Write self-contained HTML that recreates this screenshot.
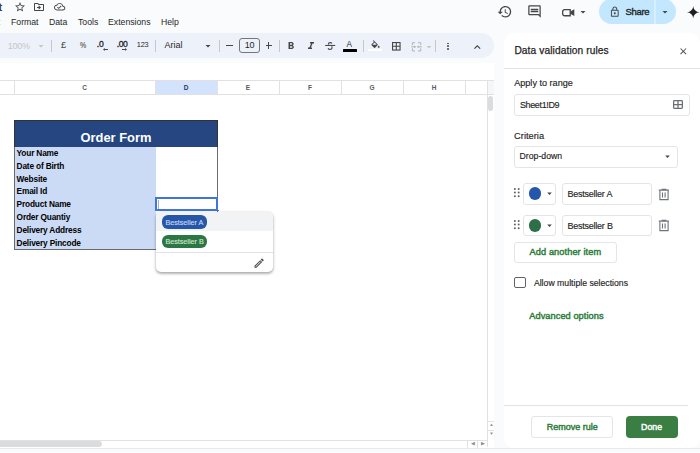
<!DOCTYPE html>
<html><head><meta charset="utf-8">
<style>
*{box-sizing:border-box;margin:0;padding:0}
html,body{width:700px;height:453px;overflow:hidden;background:#f9fbfd;font-family:"Liberation Sans",sans-serif;color:#1f1f1f;position:relative}
.a{position:absolute;white-space:nowrap;line-height:12px}
svg{position:absolute;overflow:visible}
.menu{top:15.6px;font-size:8.7px;color:#1f1f1f}
#tb{left:-20px;top:33px;width:514px;height:25px;background:#edf2fa;border-radius:12.5px}
.sep{width:1px;height:12px;background:#c7c7c7;top:39.5px}
#grid{left:0;top:63px;width:494px;height:385px;background:#fff}
.hl{background:#e1e1e1;height:1px}
.vl{background:#e1e1e1;width:1px}
.ch{top:80px;height:15px;font-size:6.5px;line-height:15px;text-align:center;color:#575a5f;font-weight:bold}
.row{left:16.6px;font-size:8.3px;font-weight:bold;color:#000;letter-spacing:-0.17px}
#panel{left:504px;top:33px;width:196px;height:414.5px;background:#fff;border-radius:10px}
.lbl{font-size:9px;color:#1f1f1f;-webkit-text-stroke:0.15px #1f1f1f}
.box{position:absolute;border:1px solid #e3e5e8;border-radius:3px;background:#fff}
.green{color:#2e7d3a;-webkit-text-stroke:0.45px #2e7d3a}
.ic{fill:#444746}
</style></head><body>

<!-- title row -->
<div class="a" style="left:-1.6px;top:-0.5px;font-size:11px;line-height:14px;font-weight:bold;color:#3c3c3c">t</div>
<svg style="left:14px;top:1px" width="12" height="12" viewBox="0 0 24 24"><path class="ic" d="M22 9.24l-7.19-.62L12 2 9.19 8.63 2 9.24l5.46 4.73L5.82 21 12 17.27 18.18 21l-1.63-7.03L22 9.24zM12 15.4l-3.76 2.27 1-4.28-3.32-2.88 4.38-.38L12 6.1l1.71 4.04 4.38.38-3.32 2.88 1 4.28L12 15.4z"/></svg>
<svg style="left:33px;top:1px" width="12" height="12" viewBox="0 0 24 24"><path class="ic" d="M20 6h-8l-2-2H4c-1.1 0-1.99.9-1.99 2L2 18c0 1.1.9 2 2 2h16c1.1 0 2-.9 2-2V8c0-1.1-.9-2-2-2zm0 12H4V6h5.17l2 2H20v10zm-7.84-6H8v2h4.16l-1.59 1.59L11.99 17 16 13.01 11.99 9l-1.41 1.41L12.16 12z"/></svg>
<svg style="left:53.8px;top:1.4px" width="11.3" height="11.3" viewBox="0 0 24 24"><path class="ic" d="M19.35 10.04C18.67 6.59 15.64 4 12 4 9.11 4 6.6 5.64 5.35 8.04 2.34 8.360 0 10.91 0 14c0 3.31 2.69 6 6 6h13c2.76 0 5-2.240 5-5 0-2.64-2.05-4.78-4.65-4.96zM19 18H6c-2.21 0-4-1.79-4-4 0-2.05 1.53-3.76 3.56-3.97l1.07-.11.5-.95C8.08 7.14 9.94 6 12 6c2.62 0 4.88 1.86 5.39 4.43l.3 1.5 1.53.11c1.56.1 2.78 1.41 2.780 2.960 0 1.65-1.35 3-3 3zm-9-3.82l-2.09-2.09L6.5 13.5 10 17l6.01-6.01-1.41-1.41z"/></svg>

<!-- right top icons -->
<svg style="left:496.8px;top:4px" width="15.5" height="15.5" viewBox="0 0 24 24"><path class="ic" d="M13 3c-4.97 0-9 4.03-9 9H1l3.89 3.89.07.14L9 12H6c0-3.87 3.13-7 7-7s7 3.13 7 7-3.13 7-7 7c-1.93 0-3.68-.79-4.94-2.06l-1.42 1.42C8.270 19.99 10.51 21 13 21c4.97 0 9-4.03 9-9s-4.03-9-9-9zm-1 5v5l4.28 2.54.72-1.21-3.5-2.08V8H12z"/></svg>
<svg style="left:527.3px;top:4.2px" width="15" height="15" viewBox="0 0 24 24"><path fill="#444746" d="M21.99 4c0-1.1-.89-2-1.99-2H4c-1.1 0-2 .9-2 2v12c0 1.1.9 2 2 2h14l4 4-.01-18zM20 4v13.17L18.83 16H4V4h16zM6 7.5h12v2H6zm0 3.5h12v2H6z"/><path fill="#9aa0a6" d="M6 9.5h12v1.5H6z"/></svg>
<svg style="left:561.7px;top:9.3px" width="12.5" height="7.4" viewBox="0 0 12.5 7.4"><path fill="none" stroke="#444746" stroke-width="1.3" d="M2.6 0.65H8.2V6.75H2.6C1.5 6.75 0.65 5.9 0.65 4.8V2.6C0.65 1.5 1.5 0.65 2.6 0.65z"/><path fill="#444746" d="M8.2 2.6L12.3 0.3V7.1L8.2 4.8z"/></svg>
<svg style="left:576.5px;top:6px" width="12" height="12" viewBox="0 0 24 24"><path class="ic" d="M7 10l5 5 5-5z"/></svg>

<!-- share -->
<div class="a" style="left:599px;top:-1px;width:77px;height:25px;border-radius:12.5px;background:#c2e7ff"></div>
<div class="a" style="left:654px;top:-1px;width:1.5px;height:25px;background:#d8effe"></div>
<svg style="left:609.3px;top:5.9px" width="11.6" height="11.6" viewBox="0 0 24 24"><path class="ic" fill="#1f1f1f" d="M18 8h-1V6c0-2.76-2.24-5-5-5S7 3.24 7 6v2H6c-1.1 0-2 .9-2 2v10c0 1.1.9 2 2 2h12c1.1 0 2-.9 2-2V10c0-1.1-.9-2-2-2zM9 6c0-1.66 1.34-3 3-3s3 1.34 3 3v2H9V6zm9 14H6V10h12v10zm-6-3c1.1 0 2-.9 2-2s-.9-2-2-2-2 .9-2 2 .9 2 2 2z"/></svg>
<div class="a" style="left:625.6px;top:5.6px;font-size:9.5px;color:#1f1f1f;letter-spacing:-0.35px;-webkit-text-stroke:0.35px #1f1f1f">Share</div>
<svg style="left:659px;top:6px" width="12" height="12" viewBox="0 0 24 24"><path class="ic" fill="#1f1f1f" d="M7 10l5 5 5-5z"/></svg>
<svg style="left:686.5px;top:5.5px" width="12.5" height="12.5" viewBox="0 0 24 24"><path fill="#1f1f1f" d="M12 0C12.5 6.8 17.2 11.5 24 12 17.2 12.5 12.5 17.2 12 24 11.5 17.2 6.8 12.5 0 12 6.8 11.5 11.5 6.8 12 0z"/></svg>

<!-- menubar -->
<div class="a menu" style="left:-1.8px">:</div>
<div class="a menu" style="left:11px">Format</div>
<div class="a menu" style="left:49px">Data</div>
<div class="a menu" style="left:78px">Tools</div>
<div class="a menu" style="left:108px">Extensions</div>
<div class="a menu" style="left:161px">Help</div>

<!-- toolbar -->
<div class="a" id="tb"></div>
<div class="a" style="left:7.7px;top:39.9px;font-size:9px;color:#c4c7c5;letter-spacing:-0.25px">100%</div>
<svg style="left:34.5px;top:40px" width="12" height="12" viewBox="0 0 24 24"><path fill="#c4c7c5" d="M7 10l5 5 5-5z"/></svg>
<div class="a sep" style="left:51.2px"></div>
<div class="a" style="left:61px;top:39.4px;font-size:9px;color:#444746;-webkit-text-stroke:0.1px #444746">£</div>
<div class="a" style="left:79.6px;top:39.2px;font-size:9.2px;color:#444746;transform:scaleX(0.76);transform-origin:0 0;-webkit-text-stroke:0.1px #444746">%</div>
<div class="a" style="left:96.8px;top:38.2px;font-size:8.6px;color:#1f1f1f;letter-spacing:-0.3px;-webkit-text-stroke:0.3px #1f1f1f">.0</div>
<svg style="left:103px;top:48px" width="5" height="3" viewBox="0 0 5 3"><path fill="#444746" d="M0 1.5L1.8 0V1.05H5V1.95H1.8V3z"/></svg>
<div class="a" style="left:116.8px;top:38.2px;font-size:8.6px;color:#1f1f1f;letter-spacing:-0.45px;-webkit-text-stroke:0.3px #1f1f1f">.00</div>
<svg style="left:122.4px;top:48px" width="5" height="3" viewBox="0 0 5 3"><path fill="#444746" d="M5 1.5L3.2 0V1.05H0V1.95H3.2V3z"/></svg>
<div class="a" style="left:136.8px;top:39.4px;font-size:7.4px;color:#1f1f1f;letter-spacing:-0.25px">123</div>
<div class="a sep" style="left:154.5px"></div>
<div class="a" style="left:164.5px;top:39.2px;font-size:9px;color:#1f1f1f">Arial</div>
<svg style="left:201.8px;top:39.5px" width="12" height="12" viewBox="0 0 24 24"><path fill="#444746" d="M7 10l5 5 5-5z"/></svg>
<div class="a sep" style="left:219px"></div>
<div class="a" style="left:226.2px;top:44.8px;width:6.4px;height:1.3px;background:#444746"></div>
<div class="a" style="left:239px;top:38.4px;width:20.7px;height:14.5px;border:1px solid #747775;border-radius:3px"></div>
<div class="a" style="left:244.8px;top:39.4px;font-size:9px;color:#1f1f1f;letter-spacing:-0.4px">10</div>
<div class="a" style="left:265.6px;top:44.8px;width:6.4px;height:1.3px;background:#444746"></div>
<div class="a" style="left:268.15px;top:42.2px;width:1.3px;height:6.4px;background:#444746"></div>
<div class="a sep" style="left:279px"></div>
<svg style="left:284.7px;top:40px" width="12" height="12" viewBox="0 0 24 24"><path fill="#444746" d="M15.6 10.79c.97-.67 1.65-1.77 1.65-2.79 0-2.26-1.75-4-4-4H7v14h7.04c2.09 0 3.71-1.7 3.71-3.79 0-1.52-.86-2.82-2.15-3.42zM10 6.5h3c.83 0 1.5.67 1.5 1.5s-.67 1.5-1.5 1.5h-3v-3zm3.5 9H10v-3h3.5c.83 0 1.5.670 1.5 1.5s-.67 1.5-1.5 1.5z"/></svg>
<svg style="left:304.5px;top:40px" width="12" height="12" viewBox="0 0 24 24"><path fill="#444746" d="M10 4v3h2.21l-3.42 8H6v3h8v-3h-2.21l3.42-8H18V4z"/></svg>
<svg style="left:325px;top:42px" width="10.5" height="8.5" viewBox="0 0 10.5 8.5"><g fill="none" stroke="#444746" stroke-width="1.05"><path d="M0.2 3.45H10.2"/><path d="M7 1.4C6.6 0.85 6 0.6 5.2 0.6 4.1 0.6 3.4 1.2 3.4 2.0 3.4 2.3 3.5 2.5 3.6 2.6"/><path d="M6.6 4.4C6.9 4.7 7.1 5.1 7.1 5.6 7.1 6.7 6.2 7.4 5 7.4 4.1 7.4 3.4 7 3 6.4"/></g></svg>
<div class="a" style="left:346.6px;top:39.4px;font-size:8.2px;color:#1f1f1f">A</div>
<div class="a" style="left:343px;top:49.4px;width:14.4px;height:2.3px;background:#000;border-radius:0.5px"></div>
<div class="a sep" style="left:363px"></div>
<svg style="left:369.5px;top:39.5px" width="11" height="9" viewBox="0 0 24 19"><path fill="#444746" d="M16.56 8.94L7.62 0 6.21 1.41l2.38 2.380-5.15 5.15c-.59.59-.59 1.54 0 2.12l5.5 5.5c.29.29.68.44 1.06.44s.77-.15 1.06-.44l5.5-5.5c.59-.58.59-1.53 0-2.12zM5.21 10L10 5.21 14.79 10H5.21zM19 11.5s-2 2.17-2 3.5c0 1.1.9 2 2 2s2-.9 2-2c0-1.33-2-3.5-2-3.5z"/></svg>
<div class="a" style="left:368.3px;top:49.3px;width:14.2px;height:2.2px;background:#fff"></div>
<svg style="left:391.9px;top:42px" width="8.6" height="8.6" viewBox="0 0 8.6 8.6"><g fill="none" stroke="#444746" stroke-width="1.1"><rect x="0.55" y="0.55" width="7.5" height="7.5"/><path d="M4.3 0.5V8.1M0.5 4.3H8.1"/></g></svg>
<svg style="left:411px;top:41.5px" width="11" height="10" viewBox="0 0 11 10"><g fill="none" stroke="#b0b3b5" stroke-width="1"><path d="M4 0.7H1.4V3.2M1.4 6.3V9H4M7 0.7H9.7V3.2M9.7 6.3V9H7"/><path d="M0.3 4.8H4.5M10.8 4.8H6.5"/></g><path fill="#b0b3b5" d="M4.9 4.8L3.2 3.4V6.2zM6.1 4.8L7.8 3.4V6.2z"/></svg>
<svg style="left:423.4px;top:40.5px" width="12" height="12" viewBox="0 0 24 24"><path fill="#c4c7c5" d="M7 10l5 5 5-5z"/></svg>
<div class="a sep" style="left:435px"></div>
<div class="a" style="left:447.2px;top:42.6px;width:1.7px;height:1.7px;background:#444746;border-radius:1px"></div>
<div class="a" style="left:447.2px;top:45.4px;width:1.7px;height:1.7px;background:#444746;border-radius:1px"></div>
<div class="a" style="left:447.2px;top:48.1px;width:1.7px;height:1.7px;background:#444746;border-radius:1px"></div>
<svg style="left:473.8px;top:44.6px" width="6.6" height="4" viewBox="0 0 6.6 4"><path fill="none" stroke="#444746" stroke-width="1.2" d="M0.4 3.6L3.3 0.8 6.2 3.6"/></svg>


<!-- grid -->
<div class="a" id="grid"></div>
<div class="a hl" style="left:0;top:80px;width:494px"></div>
<div class="a hl" style="left:0;top:94px;width:494px"></div>
<div class="a" style="left:155px;top:81px;width:62px;height:13px;background:#d3e3fd"></div>
<div class="a" style="left:488px;top:81px;width:6px;height:13px;background:#f5f6f7"></div>
<div class="a vl" style="left:14px;top:81px;height:13px"></div>
<div class="a vl" style="left:155px;top:81px;height:13px"></div>
<div class="a vl" style="left:217px;top:81px;height:13px"></div>
<div class="a vl" style="left:279px;top:81px;height:13px"></div>
<div class="a vl" style="left:341px;top:81px;height:13px"></div>
<div class="a vl" style="left:403px;top:81px;height:13px"></div>
<div class="a vl" style="left:465px;top:81px;height:13px"></div>
<div class="a vl" style="left:487px;top:81px;height:366px"></div>
<div class="a ch" style="left:14px;width:141px">C</div>
<div class="a ch" style="left:155px;width:62px;color:#233a66">D</div>
<div class="a ch" style="left:217px;width:62px">E</div>
<div class="a ch" style="left:279px;width:62px">F</div>
<div class="a ch" style="left:341px;width:62px">G</div>
<div class="a ch" style="left:403px;width:62px">H</div>
<!-- v scrollbar thumb -->
<div class="a" style="left:488.4px;top:96.3px;width:5px;height:15.2px;background:#dadce0;border-radius:2.5px"></div>
<!-- table -->
<div class="a" style="left:14px;top:120px;width:204px;height:129.5px;background:#fff;border:1px solid #6b6b6b"></div>
<div class="a" style="left:14px;top:120px;width:204px;height:26.5px;background:#264681;border:1px solid #333;border-bottom:none"></div>
<div class="a" style="left:15px;top:146.5px;width:140.5px;height:102px;background:#cbdbf5"></div>
<div class="a" style="left:14px;top:129.5px;width:204px;text-align:center;font-size:12.9px;line-height:16px;font-weight:bold;color:#fff">Order Form</div>
<div class="a row" style="top:146.93px">Your Name</div>
<div class="a row" style="top:159.77px">Date of Birth</div>
<div class="a row" style="top:172.61px">Website</div>
<div class="a row" style="top:185.45px">Email Id</div>
<div class="a row" style="top:198.29px">Product Name</div>
<div class="a row" style="top:211.13px">Order Quantiy</div>
<div class="a row" style="top:223.97px">Delivery Address</div>
<div class="a row" style="top:236.81px">Delivery Pincode</div>
<!-- selection -->
<div class="a" style="left:155px;top:197px;width:62.6px;height:14px;border:2px solid #3d76df"></div>
<div class="a" style="left:217.6px;top:209.6px;width:1.8px;height:1.8px;background:#3d76df"></div>
<div class="a" style="left:157.8px;top:199.5px;width:1.2px;height:9.5px;background:#b0b0b0"></div>
<!-- dropdown popup -->
<div class="a" style="left:156px;top:211.5px;width:116.5px;height:60.5px;background:#fff;border-radius:5px;box-shadow:0 1px 3px rgba(60,64,67,.3),0 1.5px 2.5px rgba(60,64,67,.25)"></div>
<div class="a" style="left:156px;top:212px;width:116.5px;height:18.5px;background:#f1f3f4;border-radius:5px 5px 0 0"></div>
<div class="a" style="left:161.8px;top:215.1px;width:45.2px;height:13.5px;background:#2656a8;border-radius:6px"></div>
<div class="a" style="left:165.4px;top:216.6px;font-size:7.2px;color:#c6d8f5;-webkit-text-stroke:0.15px #c6d8f5">Bestseller A</div>
<div class="a" style="left:161.8px;top:234.9px;width:45.2px;height:13.2px;background:#2c7646;border-radius:6px"></div>
<div class="a" style="left:165.4px;top:235.9px;font-size:7.2px;color:#cbe8c6;-webkit-text-stroke:0.15px #cbe8c6">Bestseller B</div>
<div class="a" style="left:156px;top:252px;width:116.5px;height:1px;background:#e3e3e3"></div>
<svg style="left:253.3px;top:257px" width="12.3" height="12.3" viewBox="0 0 24 24"><path fill="#444746" d="M3 17.25V21h3.75L17.81 9.94l-3.75-3.75L3 17.25zM5.92 19H5v-.92l9.06-9.06.92.92L5.92 19zM20.71 5.63l-2.34-2.34c-.2-.2-.45-.29-.71-.29s-.51.1-.7.29l-1.830 1.83 3.75 3.75 1.83-1.83c.39-.39.39-1.02 0-1.41z"/></svg>
<!-- bottom scrollbars -->
<div class="a hl" style="left:0;top:439.5px;width:488px"></div>
<div class="a" style="left:-4px;top:441px;width:106px;height:5.5px;background:#dadce0;border-radius:3px"></div>
<div class="a vl" style="left:467px;top:440px;height:8px"></div>
<div class="a vl" style="left:477px;top:440px;height:8px"></div>
<div class="a" style="left:471px;top:441px;font-size:4.5px;line-height:6px;color:#8a8f94">&#9664;</div>
<div class="a" style="left:481px;top:441px;font-size:4.5px;line-height:6px;color:#8a8f94">&#9654;</div>
<div class="a" style="left:488px;top:421px;width:6px;height:1px;background:#e1e1e1"></div>
<div class="a" style="left:488px;top:430px;width:6px;height:1px;background:#e1e1e1"></div>
<div class="a" style="left:489.3px;top:422px;font-size:4.5px;line-height:6px;color:#8a8f94">&#9650;</div>
<div class="a" style="left:489.3px;top:431px;font-size:4.5px;line-height:6px;color:#8a8f94">&#9660;</div>
<div class="a" style="left:0;top:448px;width:700px;height:1px;background:#e8eaed"></div>


<!-- panel -->
<div class="a" id="panel"></div>
<div class="a" style="left:514.4px;top:44.2px;font-size:10.2px;line-height:14px;color:#1f1f1f;-webkit-text-stroke:0.25px #1f1f1f;letter-spacing:0.1px">Data validation rules</div>
<svg style="left:677.8px;top:45.6px" width="10.6" height="10.6" viewBox="0 0 24 24"><path fill="#444746" d="M19 6.41L17.59 5 12 10.59 6.41 5 5 6.41 10.59 12 5 17.590 6.41 19 12 13.41 17.59 19 19 17.59 13.41 12z"/></svg>
<div class="a" style="left:504px;top:67.5px;width:196px;height:1px;background:#e3e3e3"></div>
<div class="a lbl" style="left:514.2px;top:77.4px;font-size:9.1px;-webkit-text-stroke:0.15px #1f1f1f">Apply to range</div>
<div class="box" style="left:514px;top:94px;width:176px;height:21.5px"></div>
<div class="a" style="left:519.9px;top:98.9px;font-size:9px;color:#1f1f1f;letter-spacing:-0.35px;-webkit-text-stroke:0.15px #1f1f1f">Sheet1!D9</div>
<svg style="left:673.2px;top:100.3px" width="10" height="9" viewBox="0 0 10 9"><g fill="none" stroke="#6a6e72" stroke-width="1.25"><rect x="0.62" y="0.62" width="8.76" height="7.76" rx="0.8"/><path d="M5 0.6V8.4M0.6 4.5H9.4"/></g></svg>
<div class="a lbl" style="left:514.1px;top:129.8px;font-size:9.3px">Criteria</div>
<div class="box" style="left:514px;top:146.2px;width:164px;height:21.5px"></div>
<div class="a" style="left:519.6px;top:150.4px;font-size:8.7px;color:#1f1f1f;-webkit-text-stroke:0.15px #1f1f1f">Drop-down</div>
<svg style="left:662px;top:150.7px" width="11" height="11" viewBox="0 0 24 24"><path fill="#444746" d="M7 10l5 5 5-5z"/></svg>
<!-- item rows -->
<svg style="left:513.6px;top:188.3px" width="6" height="9.2" viewBox="0 0 6 9.2"><g fill="#5f6368"><circle cx="0.9" cy="0.9" r="1.0"/><circle cx="4.7" cy="0.9" r="1.0"/><circle cx="0.9" cy="4.6" r="1.0"/><circle cx="4.7" cy="4.6" r="1.0"/><circle cx="0.9" cy="8.3" r="1.0"/><circle cx="4.7" cy="8.3" r="1.0"/></g></svg>
<div class="box" style="left:522.6px;top:183.2px;width:33px;height:21.5px"></div>
<div class="a" style="left:528.5px;top:187.3px;width:12.8px;height:12.8px;border-radius:50%;background:#2456ab"></div>
<svg style="left:543.5px;top:188px" width="11" height="11" viewBox="0 0 24 24"><path fill="#444746" d="M7 10l5 5 5-5z"/></svg>
<div class="box" style="left:561.7px;top:183.2px;width:90px;height:21.5px"></div>
<div class="a" style="left:567.5px;top:188.1px;font-size:9px;color:#1f1f1f;letter-spacing:-0.24px;-webkit-text-stroke:0.15px #1f1f1f">Bestseller A</div>
<svg style="left:658px;top:187.5px" width="12" height="13" viewBox="0 0 12 13"><g fill="none" stroke="#6f7378" stroke-width="1.1"><path d="M0.8 2.1H11M3.6 1.2H8.4"/><path d="M1.9 2.4V11.6H10.1V2.4"/><path d="M4.5 4.4V9.4M7.1 4.4V9.4"/></g></svg>

<svg style="left:513.6px;top:219.8px" width="6" height="9.2" viewBox="0 0 6 9.2"><g fill="#5f6368"><circle cx="0.9" cy="0.9" r="1.0"/><circle cx="4.7" cy="0.9" r="1.0"/><circle cx="0.9" cy="4.6" r="1.0"/><circle cx="4.7" cy="4.6" r="1.0"/><circle cx="0.9" cy="8.3" r="1.0"/><circle cx="4.7" cy="8.3" r="1.0"/></g></svg>
<div class="box" style="left:522.6px;top:214.7px;width:33px;height:21.5px"></div>
<div class="a" style="left:528.5px;top:219px;width:12.8px;height:12.8px;border-radius:50%;background:#2d6f47"></div>
<svg style="left:543.5px;top:219.5px" width="11" height="11" viewBox="0 0 24 24"><path fill="#444746" d="M7 10l5 5 5-5z"/></svg>
<div class="box" style="left:561.7px;top:214.7px;width:90px;height:21.5px"></div>
<div class="a" style="left:567.5px;top:219.6px;font-size:9px;color:#1f1f1f;letter-spacing:-0.24px;-webkit-text-stroke:0.15px #1f1f1f">Bestseller B</div>
<svg style="left:658px;top:219.0px" width="12" height="13" viewBox="0 0 12 13"><g fill="none" stroke="#6f7378" stroke-width="1.1"><path d="M0.8 2.1H11M3.6 1.2H8.4"/><path d="M1.9 2.4V11.6H10.1V2.4"/><path d="M4.5 4.4V9.4M7.1 4.4V9.4"/></g></svg>

<div class="box" style="left:514px;top:241.7px;width:102.5px;height:21.5px"></div>
<div class="a green" style="left:529.6px;top:246.2px;font-size:9.2px;letter-spacing:0.1px">Add another item</div>
<div class="a" style="left:514px;top:276.8px;width:12px;height:11px;border:1.5px solid #5f6368;border-radius:2px"></div>
<div class="a" style="left:533.9px;top:276.7px;font-size:8.7px;color:#1f1f1f;-webkit-text-stroke:0.15px #1f1f1f">Allow multiple selections</div>
<div class="a green" style="left:529.3px;top:310.2px;font-size:9.2px;letter-spacing:0.08px">Advanced options</div>
<div class="a" style="left:504px;top:404.5px;width:184px;height:1px;background:#e3e3e3"></div>
<div class="box" style="left:531.4px;top:415.5px;width:82px;height:22.2px"></div>
<div class="a green" style="left:546.7px;top:420.8px;font-size:9px">Remove rule</div>
<div class="a" style="left:625.8px;top:415.5px;width:52px;height:22.2px;border-radius:4px;background:#3b7e44"></div>
<div class="a" style="left:641.1px;top:420.8px;font-size:8.8px;color:#fff;-webkit-text-stroke:0.4px #fff">Done</div>


</body></html>
